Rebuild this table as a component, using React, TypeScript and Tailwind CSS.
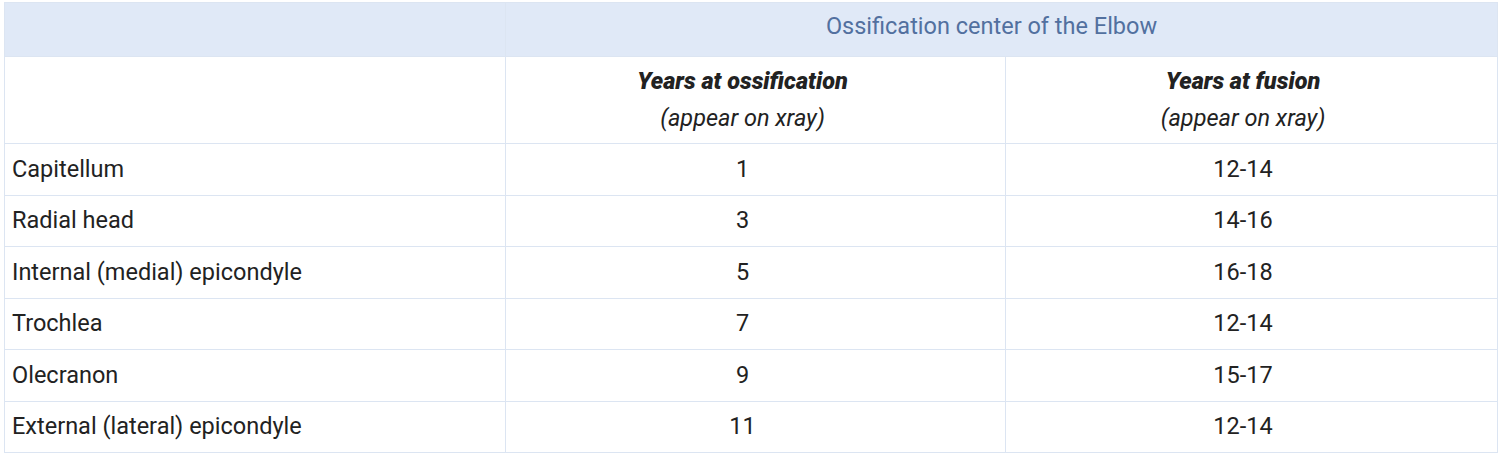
import React from "react";

const rows: [string, string, string][] = [
  ["Capitellum", "1", "12-14"],
  ["Radial head", "3", "14-16"],
  ["Internal (medial) epicondyle", "5", "16-18"],
  ["Trochlea", "7", "12-14"],
  ["Olecranon", "9", "15-17"],
  ["External (lateral) epicondyle", "11", "12-14"],
];

export default function App() {
  return (
    <div className="bg-white w-[1500px] h-[456px] pl-[4px] pt-[2px] overflow-hidden" style={{ fontFamily: "Roboto, 'Liberation Sans', sans-serif" }}>
      <table className="border-collapse w-[1493px] table-fixed text-[23.5px] text-[#222222]">
        <colgroup>
          <col className="w-[501px]" />
          <col className="w-[500px]" />
          <col className="w-[492px]" />
        </colgroup>
        <thead>
          <tr className="h-[54px] bg-[#e0e9f7]">
            <th className="border border-[#dce5f2] bg-[#e0e9f7]"></th>
            <th colSpan={2} className="border border-[#dce5f2] font-normal text-[#52709f] text-center pr-[20px] pb-[5px]">
              Ossification center of the Elbow
            </th>
          </tr>
          <tr className="h-[87px]">
            <th className="border border-[#dce5f2]"></th>
            <th className="border border-[#dce5f2] text-center font-normal leading-[37px] pr-[26px]">
              <div className="font-black italic">Years at ossification</div>
              <div className="italic">(appear on xray)</div>
            </th>
            <th className="border border-[#dce5f2] text-center font-normal leading-[37px] pr-[17px]">
              <div className="font-black italic">Years at fusion</div>
              <div className="italic">(appear on xray)</div>
            </th>
          </tr>
        </thead>
        <tbody>
          {rows.map((r, i) => (
            <tr key={i} className="h-[51.5px]">
              <td className="border border-[#dce5f2] pl-[7px]">{r[0]}</td>
              <td className="border border-[#dce5f2] text-center pr-[26px]">{r[1]}</td>
              <td className="border border-[#dce5f2] text-center pr-[17px]">{r[2]}</td>
            </tr>
          ))}
        </tbody>
      </table>
    </div>
  );
}
